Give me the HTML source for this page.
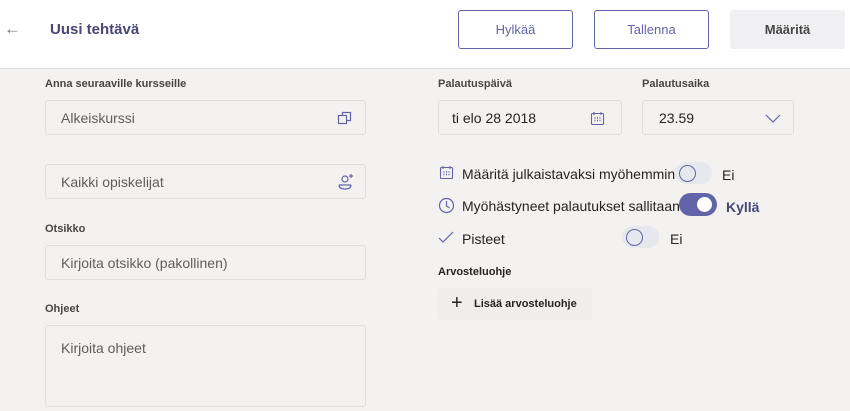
<!DOCTYPE html>
<html><head><meta charset="utf-8"><style>
*{box-sizing:border-box;margin:0;padding:0}
body{width:850px;height:411px;overflow:hidden;background:#f3f2f1;font-family:"Liberation Sans",sans-serif;position:relative;color:#252423}
.hdr{position:absolute;left:0;top:0;width:850px;height:69px;background:#fff;border-bottom:1px solid #e1dfdd}
.a{position:absolute}
.btn{position:absolute;top:10px;width:115px;height:39px;border:1px solid #6264a7;border-radius:3px;color:#6264a7;font-size:13px;display:flex;align-items:center;justify-content:center;background:#fff}
.lbl{position:absolute;font-size:11px;font-weight:bold;color:#484644}
.inp{position:absolute;height:35px;border:1px solid #e1dfdd;border-radius:3px;font-size:14px;color:#605e5c;padding-left:15px;display:flex;align-items:center}
.txt{position:absolute;font-size:14px;color:#252423}
.tg{position:absolute;width:37px;height:22px;border-radius:11px;background:#e6e8ee}
.tg::after{content:"";position:absolute;left:4px;top:3px;width:15px;height:15px;border:1.5px solid #6264a7;border-radius:50%}
</style></head><body>
<div class="hdr"></div>
<div class="a" style="left:4px;top:19px;font-size:17px;color:#777">&#8592;</div>
<div class="a" style="left:50px;top:21px;font-size:15px;font-weight:bold;color:#464775">Uusi tehtävä</div>
<div class="btn" style="left:458px">Hylkää</div>
<div class="btn" style="left:594px">Tallenna</div>
<div class="btn" style="left:730px;border:none;background:#f0f0f2;color:#484644;font-weight:bold">Määritä</div>

<div class="lbl" style="left:45px;top:78px">Anna seuraaville kursseille</div>
<div class="inp" style="left:45px;top:100px;width:321px">Alkeiskurssi</div>
<svg class="a" style="left:337px;top:110px" width="16" height="16" viewBox="0 0 16 16" fill="none" stroke="#6264a7" stroke-width="1.2"><rect x="1.5" y="5.5" width="8" height="8"/><path d="M5.5 5.5V2.5H13.5V10.5H9.5"/></svg>
<div class="inp" style="left:45px;top:164px;width:321px">Kaikki opiskelijat</div>
<svg class="a" style="left:337px;top:172px" width="18" height="20" viewBox="0 0 18 20" fill="none" stroke="#6264a7" stroke-width="1.2"><circle cx="8" cy="7" r="3"/><path d="M2 13h12M2 13c0 3 3 4 6 4s6-1 6-4M14 2v4M12 4h4"/></svg>
<div class="lbl" style="left:45px;top:223px">Otsikko</div>
<div class="inp" style="left:45px;top:245px;width:321px">Kirjoita otsikko (pakollinen)</div>
<div class="lbl" style="left:45px;top:303px">Ohjeet</div>
<div class="inp" style="left:45px;top:325px;width:321px;height:82px;align-items:flex-start;padding-top:14px">Kirjoita ohjeet</div>

<div class="lbl" style="left:438px;top:78px">Palautuspäivä</div>
<div class="inp" style="left:438px;top:100px;width:184px;color:#252423;padding-left:13px">ti elo 28 2018</div>
<svg class="a" style="left:590px;top:111px" width="15" height="15" viewBox="0 0 15 15" fill="none" stroke="#6264a7" stroke-width="1.1"><rect x="1.5" y="2.5" width="12" height="11" rx="1"/><path d="M4 1v3M11 1v3"/><path d="M4.5 7h1M7 7h1M9.5 7h1M4.5 9.5h1M7 9.5h1M9.5 9.5h1" stroke-width="1.5"/></svg>
<div class="lbl" style="left:642px;top:78px">Palautusaika</div>
<div class="inp" style="left:642px;top:100px;width:152px;color:#252423;padding-left:16px">23.59</div>
<svg class="a" style="left:765px;top:114px" width="16" height="10" viewBox="0 0 16 10" fill="none" stroke="#6264a7" stroke-width="1.2"><path d="M1 1l7 7 7-7"/></svg>

<svg class="a" style="left:439px;top:165px" width="15" height="15" viewBox="0 0 15 15" fill="none" stroke="#6264a7" stroke-width="1.1"><rect x="1.5" y="2.5" width="12" height="11" rx="1"/><path d="M4 1v3M11 1v3"/><path d="M4.5 7h1M7 7h1M9.5 7h1M4.5 9.5h1M7 9.5h1M9.5 9.5h1" stroke-width="1.5"/></svg>
<div class="txt" style="left:462px;top:166px">Määritä julkaistavaksi myöhemmin</div>
<div class="tg" style="left:675px;top:162px"></div>
<div class="txt" style="left:722px;top:167px">Ei</div>

<svg class="a" style="left:438px;top:197px" width="17" height="17" viewBox="0 0 17 17" fill="none" stroke="#6264a7" stroke-width="1.2"><circle cx="8.5" cy="8.5" r="7"/><path d="M8.5 4v5l3 2"/></svg>
<div class="txt" style="left:462px;top:198px">Myöhästyneet palautukset sallitaan</div>
<div class="a" style="left:679px;top:193px;width:38px;height:23px;border-radius:12px;background:#6264a7"><div class="a" style="left:18px;top:4px;width:15px;height:15px;border-radius:50%;background:#fff"></div></div>
<div class="txt" style="left:726px;top:199px;font-weight:bold;color:#464775">Kyllä</div>

<svg class="a" style="left:438px;top:231px" width="16" height="14" viewBox="0 0 16 14" fill="none" stroke="#6264a7" stroke-width="1.2"><path d="M1 7l4 4 10-10"/></svg>
<div class="txt" style="left:462px;top:231px">Pisteet</div>
<div class="tg" style="left:622px;top:226px"></div>
<div class="txt" style="left:670px;top:231px">Ei</div>

<div class="lbl" style="left:438px;top:266px;color:#252423">Arvosteluohje</div>
<div class="a" style="left:438px;top:288px;width:154px;height:32px;background:#efeeed;border-radius:3px"></div>
<div class="a" style="left:451px;top:292px;font-size:20px;font-weight:300;color:#252423">+</div>
<div class="a" style="left:474px;top:298px;font-size:11px;font-weight:bold;color:#252423">Lisää arvosteluohje</div>
</body></html>
